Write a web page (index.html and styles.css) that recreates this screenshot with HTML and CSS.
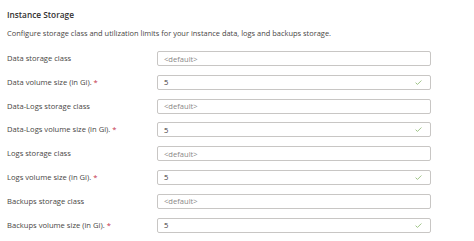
FILE: index.html
```html
<!DOCTYPE html>
<html>
<head>
<meta charset="utf-8">
<link rel="stylesheet" href="styles.css">
</head>
<body>
<div class="section">
  <h2 class="title">Instance Storage</h2>
  <p class="desc">Configure storage class and utilization limits for your instance data, logs and backups storage.</p>
  <div class="form">
    <label class="label">Data storage class</label>
    <div class="field"><span class="placeholder">&lt;default&gt;</span></div>

    <label class="label">Data volume size (in Gi). <span class="req">*</span></label>
    <div class="field"><span class="value">5</span><svg class="check" viewBox="0 0 8 6"><path d="M0.5 3.2 L2.8 5.3 L7.5 0.6" /></svg></div>

    <label class="label">Data-Logs storage class</label>
    <div class="field"><span class="placeholder">&lt;default&gt;</span></div>

    <label class="label">Data-Logs volume size (in Gi). <span class="req">*</span></label>
    <div class="field"><span class="value">5</span><svg class="check" viewBox="0 0 8 6"><path d="M0.5 3.2 L2.8 5.3 L7.5 0.6" /></svg></div>

    <label class="label">Logs storage class</label>
    <div class="field"><span class="placeholder">&lt;default&gt;</span></div>

    <label class="label">Logs volume size (in Gi). <span class="req">*</span></label>
    <div class="field"><span class="value">5</span><svg class="check" viewBox="0 0 8 6"><path d="M0.5 3.2 L2.8 5.3 L7.5 0.6" /></svg></div>

    <label class="label">Backups storage class</label>
    <div class="field"><span class="placeholder">&lt;default&gt;</span></div>

    <label class="label">Backups volume size (in Gi). <span class="req">*</span></label>
    <div class="field"><span class="value">5</span><svg class="check" viewBox="0 0 8 6"><path d="M0.5 3.2 L2.8 5.3 L7.5 0.6" /></svg></div>
  </div>
</div>
</body>
</html>
```
FILE: styles.css
```css
html, body {
  margin: 0;
  padding: 0;
  background: #ffffff;
}
body {
  font-family: "Open Sans", "Noto Sans", sans-serif;
  color: #3b3a39;
}
.section {
  padding: 8px 7px 0 7px;
}
.title {
  margin: 0;
  font-size: 8.3px;
  line-height: 14px;
  font-weight: 600;
  color: #323130;
}
.desc {
  margin: 4px 0 0 0;
  font-size: 7.45px;
  line-height: 14px;
  color: #484644;
}
.form {
  margin-top: 11px;
  display: grid;
  grid-template-columns: 150px 274px;
  grid-auto-rows: 15px;
  row-gap: 8.8px;
  align-items: center;
}
.label {
  font-size: 7.6px;
  line-height: 15px;
  color: #484644;
  white-space: nowrap;
}
.req {
  color: #c4314b;
}
.field {
  box-sizing: border-box;
  height: 15px;
  border: 1px solid #c8c6c4;
  border-radius: 2px;
  display: flex;
  align-items: center;
  padding: 0 6px;
  font-size: 7.6px;
}
.placeholder {
  color: #8a8886;
  flex: 1;
}
.value {
  color: #3b3a39;
  flex: 1;
}
.check {
  width: 7px;
  height: 5px;
  margin-right: 2px;
  fill: none;
  stroke: #8db870;
  stroke-width: 1;
}
```
